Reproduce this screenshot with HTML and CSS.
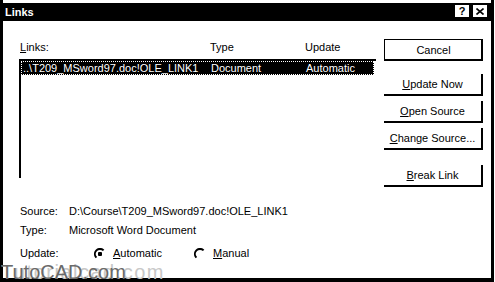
FILE: index.html
```html
<!DOCTYPE html>
<html>
<head>
<meta charset="utf-8">
<link rel="stylesheet" href="styles.css">
</head>
<body>
<div class="screen">
  <div class="dialog">
    <div class="titlebar">
      <span class="title">Links</span>
      <div class="tb-buttons">
        <span class="tb-btn">?</span>
        <span class="tb-btn"><svg width="8" height="7" viewBox="0 0 8 7"><path d="M0.5 0.5 L7.5 6.5 M7.5 0.5 L0.5 6.5" stroke="#000" stroke-width="1.6" fill="none"/></svg></span>
      </div>
    </div>
    <div class="body">
      <div class="main">
        <div class="left">
          <div class="cols header"><span><u>L</u>inks:</span><span>Type</span><span>Update</span></div>
          <div class="listbox">
            <div class="cols row"><span>..\T209_MSword97.doc!OLE_LINK1</span><span>Document</span><span>Automatic</span></div>
          </div>
        </div>
        <div class="buttons">
          <div class="btn default">Cancel</div>
          <div class="btn after-default"><span><u>U</u>pdate Now</span></div>
          <div class="btn"><span><u>O</u>pen Source</span></div>
          <div class="btn"><span><u>C</u>hange Source...</span></div>
          <div class="btn break"><span><u>B</u>reak Link</span></div>
        </div>
      </div>
      <div class="info">
        <div class="info-row"><span class="lbl">Source:</span><span>D:\Course\T209_MSword97.doc!OLE_LINK1</span></div>
        <div class="info-row"><span class="lbl">Type:</span><span>Microsoft Word Document</span></div>
        <div class="info-row update-row">
          <span class="lbl">Update:</span>
          <span class="radio auto"><svg width="12" height="12" viewBox="0 0 12 12"><path d="M9.6 2.4 A5 5 0 0 0 2.4 9.6" stroke="#000" stroke-width="2" fill="none"/><rect x="4" y="4" width="4" height="4" rx="1" fill="#000"/></svg><span><u>A</u>utomatic</span></span>
          <span class="radio"><svg width="12" height="12" viewBox="0 0 12 12"><path d="M9.6 2.4 A5 5 0 0 0 2.4 9.6" stroke="#000" stroke-width="2" fill="none"/></svg><span><u>M</u>anual</span></span>
        </div>
      </div>
    </div>
  </div>
  <div class="watermark">
    <span class="wm-light">Tutorialcad.com</span>
    <span class="wm-dark">TutoCAD.com</span>
  </div>
</div>
</body>
</html>
```

FILE: styles.css
```css
body {
  margin: 0;
  background: #fff;
  font-family: "Liberation Sans", Arial, sans-serif;
  font-size: 11px;
  color: #000;
}

.screen {
  position: relative;
  width: 495px;
  height: 282px;
  overflow: hidden;
}

.dialog {
  width: 494px;
  height: 282px;
  box-sizing: border-box;
  border-left: 3px solid #000;
  border-right: 3px solid #000;
  border-bottom: 4px solid #000;
  padding-top: 3px;
  display: flex;
  flex-direction: column;
}

.titlebar {
  height: 18px;
  flex: none;
  background: #000;
  display: flex;
  align-items: center;
  justify-content: space-between;
}

.title {
  color: #fff;
  font-weight: bold;
  padding-left: 2px;
  line-height: 13px;
}

.tb-buttons {
  display: flex;
  gap: 2px;
  margin-right: 2px;
}

.tb-btn {
  width: 16px;
  height: 14px;
  box-sizing: border-box;
  background: #fff;
  border-right: 2px solid #000;
  border-bottom: 2px solid #000;
  display: flex;
  align-items: center;
  justify-content: center;
  font-weight: bold;
  font-size: 11px;
  line-height: 1;
}

.body {
  padding: 18px 0 0 16px;
}

.main {
  display: flex;
  align-items: flex-start;
}

.left {
  width: 357px;
  margin-top: 2px;
}

.cols {
  display: grid;
  grid-template-columns: 190px 95px 1fr;
  line-height: 13px;
  white-space: nowrap;
}

.header {
  padding-left: 1px;
  height: 13px;
}

.listbox {
  margin-top: 5px;
  height: 119px;
  box-sizing: border-box;
  border-left: 2px solid #000;
  border-top: 2px solid #000;
}

.row {
  width: 353px;
  height: 14px;
  box-sizing: border-box;
  background: #000;
  color: #fff;
  padding-left: 2px;
  grid-template-columns: 188px 95px 1fr;
  line-height: 14px;
  outline: 1px dotted #fff;
  outline-offset: -1px;
}

.buttons {
  margin-left: 8px;
  width: 99px;
  display: flex;
  flex-direction: column;
  gap: 5px;
}

.btn {
  height: 22px;
  box-sizing: border-box;
  display: flex;
  align-items: center;
  justify-content: center;
  border-right: 2px solid #000;
  border-bottom: 2px solid #000;
  background: #fff;
  white-space: nowrap;
}

.btn.default {
  border: 1px solid #000;
  box-shadow: inset -1px -1px 0 #000;
}

.btn.after-default {
  margin-top: 8px;
}

.btn.break {
  margin-top: 10px;
}

.info {
  margin-top: 18px;
  padding-left: 1px;
  display: flex;
  flex-direction: column;
  gap: 6px;
}

.info-row {
  display: flex;
  align-items: center;
  height: 13px;
  line-height: 13px;
  white-space: nowrap;
}

.lbl {
  width: 49px;
}

.update-row {
  margin-top: 4px;
}

.radio {
  display: flex;
  align-items: center;
}

.radio svg {
  margin-right: 7px;
}

.radio.auto {
  margin-left: 25px;
  width: 100px;
}

.watermark {
  position: absolute;
  left: 0;
  top: 261px;
  font-size: 20px;
  line-height: 22px;
  white-space: nowrap;
}

.wm-light {
  position: absolute;
  left: 1px;
  top: 0;
  color: #c8c8c8;
  letter-spacing: 1.5px;
}

.wm-dark {
  position: absolute;
  left: 1px;
  top: 0;
  color: #6a6a6a;
}
```
